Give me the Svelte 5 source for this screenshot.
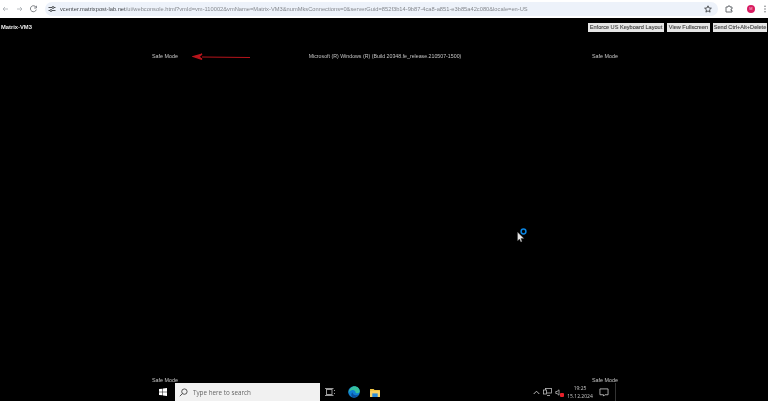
<script>
  const url = 'vcenter.matrixpost-lab.net';
  const rest = '/ui/webconsole.html?vmId=vm-110002&vmName=Matrix-VM3&numMksConnections=0&serverGuid=852f3b14-9b87-4ca8-a851-e3b85a42c080&locale=en-US';
  const buttons = ['Enforce US Keyboard Layout', 'View Fullscreen', 'Send Ctrl+Alt+Delete'];
</script>

<div class="page">
  <header class="chrome">
    <svg class="nav" width="40" height="18" viewBox="0 0 40 18" fill="none" stroke="#a8adb2" stroke-width="0.8">
      <path d="M8 9H3M5 7 3 9 5 11" />
      <path d="M17 9h5M20 7 22 9 20 11" />
      <path stroke="#5f6368" d="M36 7.200A3 3 0 1 0 36.300 9.600M36.400 5.800v2.200h-2.200" />
    </svg>
    <div class="omnibox">
      <svg class="tune" width="8" height="8" viewBox="0 0 8 8" fill="none" stroke="#3c4043" stroke-width="0.9">
        <path d="M0.5 2.500h3.500M6 2.500h1.500M0.500 5.500h1.500M4 5.500h3.500" />
        <circle cx="5" cy="2.500" r="1" /><circle cx="3" cy="5.500" r="1" />
      </svg>
      <span class="url"><span class="host">{url}</span>{rest}</span>
      <svg class="star" width="8" height="8" viewBox="0 0 10 10" fill="none" stroke="#3c4043" stroke-width="1.100">
        <path d="M5 1l1.200 2.700 3 .3-2.300 2 .7 2.900L5 7.400 2.400 8.900l.7-2.900-2.300-2 3-.3z" />
      </svg>
    </div>
    <svg class="ext" width="8" height="8" viewBox="0 0 8 8" fill="none" stroke="#5f6368" stroke-width="0.9">
      <path d="M1 2h2V1h2v1h2v2H6v1.500h1V7H1z" />
    </svg>
    <span class="divider"></span>
    <span class="avatar">M</span>
    <svg class="dots" width="2" height="8" viewBox="0 0 2 8" fill="#5f6368">
      <circle cx="1" cy="1.200" r=".7" /><circle cx="1" cy="4" r=".7" /><circle cx="1" cy="6.800" r=".7" />
    </svg>
  </header>

  <main class="console">
    <div class="toolbar">
      <span class="title">Matrix-VM3</span>
      <div class="buttons">
        {#each buttons as b}
          <button type="button">{b}</button>
        {/each}
      </div>
    </div>

    <div class="screen">
      <div class="watermark top">
        <span>Safe Mode</span>
        <span class="build">Microsoft (R) Windows (R) (Build 20348.fe_release.210507-1500)</span>
        <span>Safe Mode</span>
      </div>

      <svg class="arrow" width="60" height="10" viewBox="0 0 60 10" fill="none" stroke="#b8141b">
        <path stroke-width="1" d="M58 5.500 10 5" />
        <path stroke-width="1.300" d="M10 2 1.500 4.500 10 7.500 7 4.800z" fill="#b8141b" />
      </svg>

      <div class="busy">
        <svg width="16" height="16" viewBox="0 0 16 16">
          <path d="M1.500 5v9l2-2 1.300 3 1.300-.6L4.900 11.500H8z" fill="#e6e6e6" stroke="#333" stroke-width=".4" />
          <circle cx="7.500" cy="4.500" r="2.400" fill="none" stroke="#0a84e0" stroke-width="1.500" />
        </svg>
      </div>

      <div class="watermark bottom">
        <span>Safe Mode</span>
        <span>Safe Mode</span>
      </div>

      <footer class="taskbar">
        <svg class="start" width="8" height="8" viewBox="0 0 10 10" fill="#fff">
          <path d="M0 1.400 4.300.8v3.900H0zM4.900.7 10 0v4.700H4.900zM0 5.300h4.300v3.900L0 8.600zM4.900 5.300H10V10l-5.100-.7z" />
        </svg>
        <div class="search">
          <svg width="9" height="9" viewBox="0 0 9 9" fill="none" stroke="#444" stroke-width=".9">
            <circle cx="5.400" cy="3.600" r="2.700" /><path d="M3.500 5.500 .8 8.200" />
          </svg>
          <span>Type here to search</span>
        </div>
        <svg class="taskview" width="10" height="8" viewBox="0 0 10 8" fill="none" stroke="#aaa" stroke-width=".9">
          <rect x="1.500" y="1.500" width="5.500" height="5" /><path d="M0 .5h8.500M0 7.500h8.500M9.500 2v1M9.500 5v1" />
        </svg>
        <svg class="edge" width="12" height="12" viewBox="0 0 12 12">
          <circle cx="6" cy="6" r="5.800" fill="#0f7fd4" />
          <path d="M.6 7C1 3 4 .3 6.500.3c3 0 5.300 2.300 5.300 5 0 1.200-1 2-2.500 2-1 0-1.700-.3-1.700-.8 0-1.800-2-3-4-2.300C2 4.700 1 5.700.6 7z" fill="#35c1a0" />
          <path d="M4.500 6.500c0 1.500 1.700 2.800 3.500 2.800.7 0 1.500-.2 2.500-.7-1 2-3 3-4.700 3-1.500 0-2.500-1-2.500-2.500 0-1 .3-2 1-2.600z" fill="#0b4f9e" />
        </svg>
        <svg class="files" width="10" height="9" viewBox="0 0 11 10">
          <path d="M0 1h4l1 1.200h6V10H0z" fill="#f3c744" />
          <rect x="0" y="3.500" width="11" height="6.500" fill="#fbd565" />
          <rect x="2.500" y="6" width="6" height="4" fill="#2f8fd8" />
        </svg>

        <div class="tray">
          <svg width="7" height="5" viewBox="0 0 7 5" fill="none" stroke="#ccc" stroke-width=".9">
            <path d="M.7 4 3.500 1.200 6.300 4" />
          </svg>
          <svg class="net" width="9" height="8" viewBox="0 0 9 8" fill="none" stroke="#bbb" stroke-width=".8">
            <rect x="2.500" y=".5" width="6" height="4.500" /><rect x=".5" y="2" width="3" height="4" fill="#000" /><path d="M4 7.500h3" />
          </svg>
          <span class="vol">
            <svg width="7" height="7" viewBox="0 0 7 7" fill="none" stroke="#bbb" stroke-width=".8">
              <path d="M.8 2.500h1.200L4 .8v5.400L2 4.500H.8z" />
            </svg>
            <i></i>
          </span>
          <div class="clock"><span>19:25</span><span>15.12.2024</span></div>
          <svg class="notify" width="10" height="9" viewBox="0 0 11 10" fill="none" stroke="#ccc" stroke-width=".9">
            <path d="M1 1h9v6.500H6.500L5 9V7.500H1z" />
          </svg>
          <span class="edge-line"></span>
        </div>
      </footer>
    </div>
  </main>
</div>

<style>
  :global(body) { margin: 0; background: #000; }
  .page {
    width: 768px; height: 401px; display: flex; flex-direction: column; overflow: hidden;
    font-family: "Open Sans", "Liberation Sans", sans-serif;
  }
  .chrome {
    height: 18px; flex: none; display: flex; align-items: center; background: #fff;
    padding-right: 2px; box-sizing: border-box;
  }
  .nav { margin-right: 5px; flex: none; }
  .omnibox {
    flex: none; width: 673px; height: 14px; border-radius: 7px; background: #edf2fa;
    display: flex; align-items: center; padding: 0 6px 0 3px; box-sizing: border-box;
  }
  .tune { flex: none; }
  .url {
    margin-left: 4px; font: 5.740px "Liberation Sans", sans-serif; color: #85888d; white-space: nowrap;
    flex: 1; overflow: hidden; filter: blur(.3px);
  }
  .host { color: #44474b; }
  .ext { margin-left: 7px; flex: none; }
  .divider { width: 1px; height: 8px; background: #d5d8dc; margin-left: 7px; }
  .avatar {
    width: 8px; height: 8px; border-radius: 50%; background: #d81b60; color: #f7c9da;
    font: 4px/8px "Liberation Sans", sans-serif; text-align: center; margin-left: 7px; flex: none;
  }
  .dots { margin-left: 9px; flex: none; }

  .console { flex: 1; background: #000; display: flex; flex-direction: column; min-height: 0; color: #e2e2e2; }
  .toolbar {
    display: flex; justify-content: space-between; padding: 5px 1px 0 1px; height: 14px;
    flex: none; box-sizing: border-box;
  }
  .title { font: bold 5.800px/9px "Liberation Sans", sans-serif; color: #eee; filter: blur(.3px); }
  .buttons { display: flex; gap: 3px; }
  button {
    height: 9px; padding: 0; border: 0; background: #e6e6e6; color: #444;
    font: 5.600px/9px "Liberation Sans", sans-serif; -webkit-text-stroke: .12px #444;
    filter: blur(.3px); text-align: center;
  }
  button:nth-child(1) { width: 76px; }
  button:nth-child(2) { width: 43px; }
  button:nth-child(3) { width: 54px; }

  .screen { flex: 1; position: relative; display: flex; flex-direction: column; min-height: 0; }
  .watermark {
    display: flex; justify-content: space-between; padding: 0 150px 0 152px;
    font: 5.400px/7px "Liberation Sans", sans-serif; color: #c4c4c4; filter: blur(.3px);
  }
  .build { font-size: 5.250px; }
  .top { margin-top: 21px; }
  .bottom { margin-top: auto; line-height: 6px; }
  .arrow { position: absolute; left: 192px; top: 20px; }
  .busy { position: absolute; left: 516px; top: 195px; line-height: 0; }

  .taskbar { height: 18px; flex: none; display: flex; align-items: center; background: #000; }
  .start { margin-left: 159px; flex: none; filter: blur(.3px); }
  .search {
    width: 145px; height: 18px; margin-left: 8px; flex: none; background: #f1f1f1;
    display: flex; align-items: center; gap: 5px; padding-left: 4px; box-sizing: border-box;
    font: 6.300px "Open Sans", sans-serif; color: #666; filter: blur(.3px);
  }
  .taskview { margin-left: 5px; flex: none; filter: blur(.2px); }
  .edge { margin-left: 13px; flex: none; filter: blur(.3px); }
  .files { margin-left: 10px; flex: none; filter: blur(.3px); }
  .tray { margin-left: 153px; display: flex; align-items: center; height: 18px; flex: none; }
  .net { margin-left: 3px; }
  .vol { position: relative; margin-left: 3px; width: 9px; height: 7px; }
  .vol svg { display: block; }
  .vol i { position: absolute; right: 0; bottom: -1px; width: 4px; height: 4px; border-radius: 1px; background: #e8202a; }
  .clock {
    width: 26px; margin-left: 3px; display: flex; flex-direction: column; align-items: center;
    font: 5px/8px "Open Sans", sans-serif; color: #c8c8c8; filter: blur(.25px);
  }
  .notify { margin-left: 6px; }
  .edge-line { width: 1px; height: 18px; background: #333; margin-left: 6px; }
</style>
